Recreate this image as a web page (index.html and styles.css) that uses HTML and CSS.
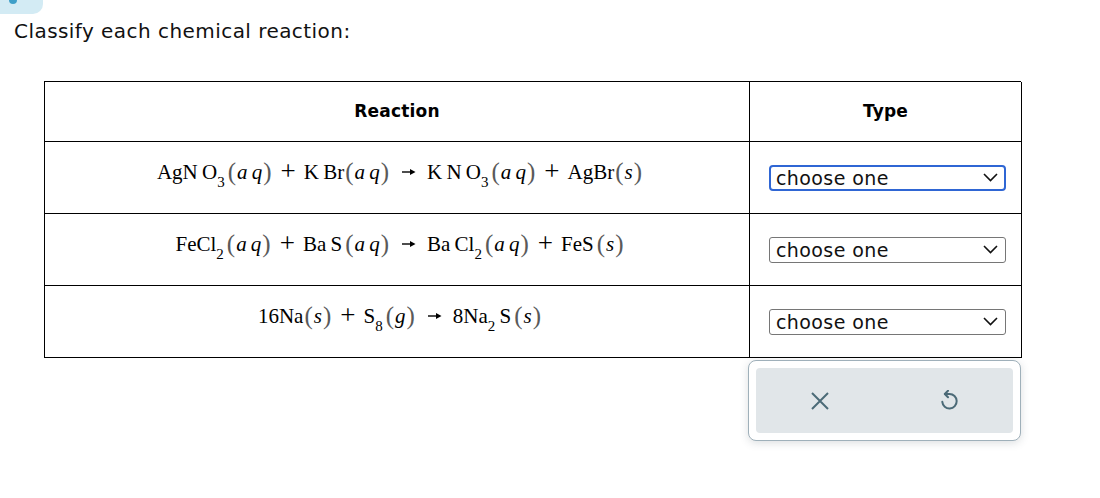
FILE: index.html
```html
<!DOCTYPE html>
<html lang="en">
<head>
<meta charset="utf-8">
<title>Classify each chemical reaction</title>
<link rel="stylesheet" href="styles.css">
</head>
<body>
<div class="tab"><span class="tab-mark"></span></div>
<h1 class="prompt">Classify each chemical reaction:</h1>
<div class="area">
  <div class="table">
    <div class="cell head">Reaction</div>
    <div class="cell head last">Type</div>

    <div class="cell eqcell">
      <span class="eq">AgN&thinsp;O<sub>3</sub><span class="ph"><span class="par">(</span><i>a</i>&thinsp;<i>q</i><span class="par">)</span></span><span class="op">+</span>K&thinsp;Br<span class="ph tight"><span class="par">(</span><i>a</i>&thinsp;<i>q</i><span class="par">)</span></span><span class="arrow"><svg width="14" height="8" viewBox="0 0 14 8"><path d="M0 4H9" stroke="#000" stroke-width="1.4"/><path d="M8 1L13.5 4L8 7Z" fill="#000"/></svg></span>K&thinsp;N&thinsp;O<sub>3</sub><span class="ph"><span class="par">(</span><i>a</i>&thinsp;<i>q</i><span class="par">)</span></span><span class="op">+</span>AgBr<span class="ph tight"><span class="par">(</span><i>s</i><span class="par">)</span></span></span>
    </div>
    <div class="cell selcell last">
      <div class="select focus"><span class="sel-text">choose one</span><svg class="chev" width="15" height="9" viewBox="0 0 15 9"><path d="M1 1L7.5 7.5L14 1" fill="none" stroke="#111" stroke-width="1.6"/></svg></div>
    </div>

    <div class="cell eqcell">
      <span class="eq">FeCl<sub>2</sub><span class="ph"><span class="par">(</span><i>a</i>&thinsp;<i>q</i><span class="par">)</span></span><span class="op">+</span>Ba&thinsp;S<span class="ph"><span class="par">(</span><i>a</i>&thinsp;<i>q</i><span class="par">)</span></span><span class="arrow"><svg width="14" height="8" viewBox="0 0 14 8"><path d="M0 4H9" stroke="#000" stroke-width="1.4"/><path d="M8 1L13.5 4L8 7Z" fill="#000"/></svg></span>Ba&thinsp;Cl<sub>2</sub><span class="ph"><span class="par">(</span><i>a</i>&thinsp;<i>q</i><span class="par">)</span></span><span class="op">+</span>FeS<span class="ph"><span class="par">(</span><i>s</i><span class="par">)</span></span></span>
    </div>
    <div class="cell selcell last">
      <div class="select"><span class="sel-text">choose one</span><svg class="chev" width="15" height="9" viewBox="0 0 15 9"><path d="M1 1L7.5 7.5L14 1" fill="none" stroke="#111" stroke-width="1.6"/></svg></div>
    </div>

    <div class="cell eqcell bottom">
      <span class="eq">16Na<span class="ph tight"><span class="par">(</span><i>s</i><span class="par">)</span></span><span class="op">+</span>S<sub>8</sub><span class="ph"><span class="par">(</span><i>g</i><span class="par">)</span></span><span class="arrow"><svg width="14" height="8" viewBox="0 0 14 8"><path d="M0 4H9" stroke="#000" stroke-width="1.4"/><path d="M8 1L13.5 4L8 7Z" fill="#000"/></svg></span>8Na<sub>2</sub>&thinsp;S<span class="ph"><span class="par">(</span><i>s</i><span class="par">)</span></span></span>
    </div>
    <div class="cell selcell last bottom">
      <div class="select"><span class="sel-text">choose one</span><svg class="chev" width="15" height="9" viewBox="0 0 15 9"><path d="M1 1L7.5 7.5L14 1" fill="none" stroke="#111" stroke-width="1.6"/></svg></div>
    </div>
  </div>

  <div class="actions">
    <div class="actions-inner">
      <button class="act" aria-label="Clear">
        <svg width="20" height="20" viewBox="0 0 20 20"><path d="M2 2L18 18M18 2L2 18" stroke="#4b6a77" stroke-width="2" fill="none"/></svg>
      </button>
      <button class="act" aria-label="Undo">
        <svg width="22" height="22" viewBox="0 0 22 22"><path d="M7 4H11.5A7.2 7.2 0 1 1 4.3 11.8" fill="none" stroke="#4b6a77" stroke-width="2" stroke-linecap="round"/><path d="M10 0.8L6.8 4L10 7.2" fill="none" stroke="#4b6a77" stroke-width="2" stroke-linecap="round" stroke-linejoin="round"/></svg>
      </button>
    </div>
  </div>
</div>
</body>
</html>
```
FILE: styles.css
```css
html, body {
  margin: 0;
  padding: 0;
  background: #fff;
}
body {
  width: 1100px;
  height: 498px;
  overflow: hidden;
  font-family: "DejaVu Sans", Verdana, sans-serif;
  color: #000;
}
.tab {
  width: 43px;
  height: 14px;
  background: #d3ebf4;
  border-bottom-right-radius: 10px;
  position: relative;
}
.tab-mark {
  position: absolute;
  left: 9px;
  top: 0;
  width: 8px;
  height: 4px;
  background: #3f9fc8;
  border-radius: 0 0 4px 4px;
}
.prompt {
  margin: 6px 0 0 14px;
  font-size: 20px;
  line-height: 23px;
  font-weight: normal;
  letter-spacing: 0.45px;
  color: #111;
}
.area {
  margin: 38px 0 0 44px;
  width: 977px;
  display: flex;
  flex-direction: column;
  align-items: flex-end;
}
.table {
  width: 977px;
  box-sizing: border-box;
  display: grid;
  grid-template-columns: 705px 272px;
  grid-template-rows: 60px 72px 72px 72px;
  border-top: 1px solid #000;
  border-left: 1px solid #000;
}
.cell {
  border-right: 1px solid #000;
  border-bottom: 1px solid #000;
  display: flex;
  align-items: center;
  justify-content: center;
  box-sizing: border-box;
}
.head {
  font-weight: bold;
  font-size: 17px;
  letter-spacing: 0.2px;
  padding-bottom: 1px;
}
.eqcell {
  padding: 0 0 12px 6px;
}
.eq {
  font-family: "Liberation Serif", "Times New Roman", serif;
  font-size: 21px;
  white-space: nowrap;
  line-height: 26px;
}
.eq sub {
  font-size: 15px;
  vertical-align: -8px;
  line-height: 0;
}
.eq i {
  font-style: italic;
}
.ph {
  margin-left: 2px;
}
.ph.tight {
  margin-left: 0;
}
.par {
  font-size: 25px;
  color: #5a5a5a;
  padding: 0 1px;
  position: relative;
  top: 1px;
}
.op {
  font-size: 27px;
  line-height: 20px;
  margin: 0 8px;
  position: relative;
  top: 1px;
}
.arrow {
  display: inline-block;
  margin: 0 11px 0 12px;
  vertical-align: 3px;
}
.arrow svg {
  display: block;
}
.selcell {
  padding-left: 4px;
}
.select {
  width: 237px;
  height: 26px;
  box-sizing: border-box;
  border: 1px solid #767676;
  border-radius: 3px;
  display: flex;
  align-items: center;
  justify-content: space-between;
  padding: 0 7px 0 6px;
  background: #fff;
}
.select.focus {
  border: 2px solid #2f66d4;
  border-radius: 4px;
  padding: 0 6px 0 5px;
}
.sel-text {
  font-size: 19px;
  letter-spacing: 0.4px;
  color: #111;
  line-height: 22px;
}
.chev {
  display: block;
}
.actions {
  margin-top: 2px;
  width: 273px;
  box-sizing: border-box;
  border: 1px solid #9fb0ba;
  border-radius: 8px;
  padding: 7px;
  background: #fff;
  box-shadow: 0 2px 8px rgba(60, 80, 90, 0.18);
}
.actions-inner {
  height: 65px;
  background: #e1e6e9;
  border-radius: 4px;
  display: flex;
}
.act {
  flex: 1;
  border: 0;
  background: transparent;
  display: flex;
  align-items: center;
  justify-content: center;
  padding: 0;
}
.act svg {
  display: block;
}
```
